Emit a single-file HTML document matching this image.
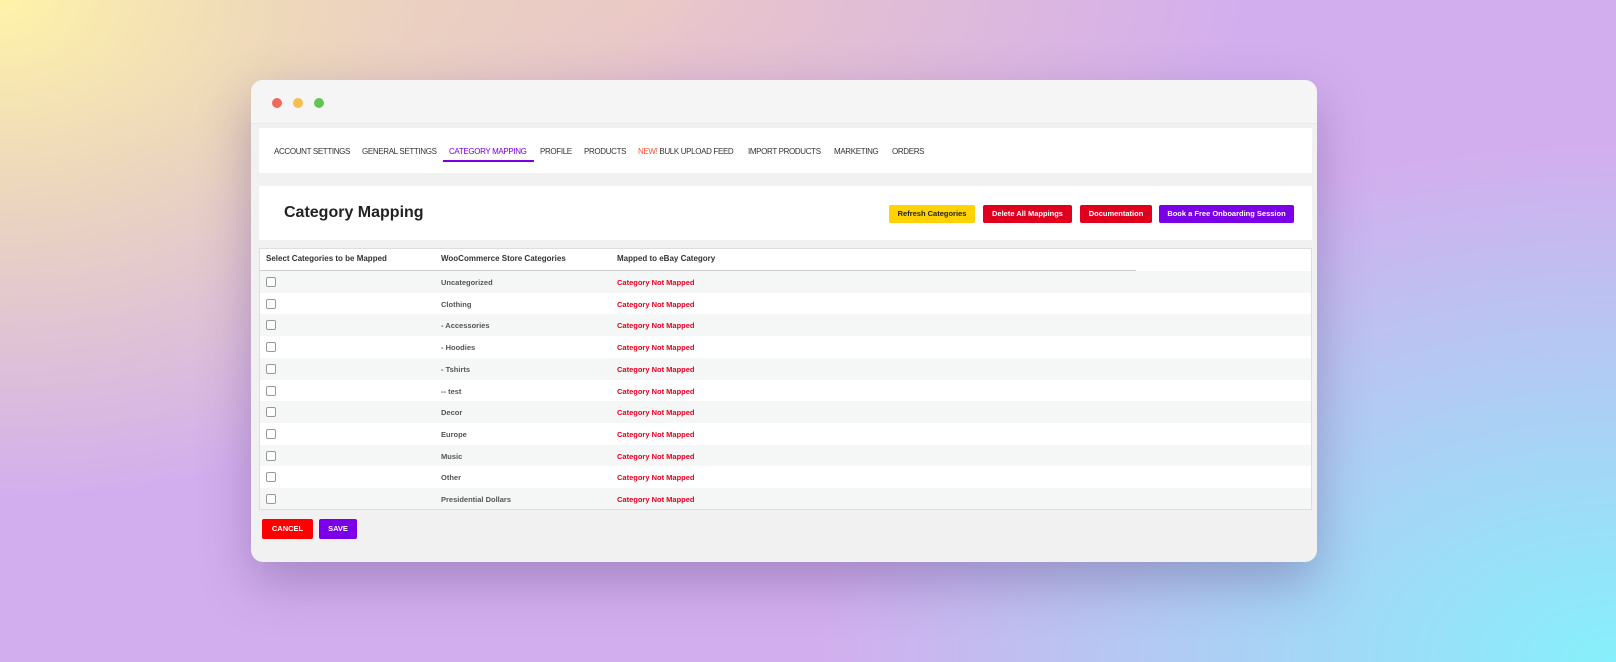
<!DOCTYPE html>
<html><head><style>
*{margin:0;padding:0;box-sizing:border-box}
body{width:1616px;height:662px;overflow:hidden;font-family:"Liberation Sans",sans-serif;position:relative;
background:
radial-gradient(ellipse 700px 500px at 0% 0%,#fff3a8 0%,rgba(246,230,170,.7) 40%,rgba(240,210,180,0) 100%),
radial-gradient(ellipse 800px 520px at 100% 100%,#86f0fb 0%,rgba(134,240,251,.6) 40%,rgba(134,240,251,0) 100%),
radial-gradient(ellipse 600px 300px at 40% 0%,rgba(240,205,190,.8) 0%,rgba(240,205,190,0) 100%),
#d3aeee;}
.win{position:absolute;left:251px;top:80px;width:1066px;height:482px;background:#f1f1f1;border-radius:12px;overflow:hidden;box-shadow:0 20px 50px rgba(80,60,120,.35)}
.tb{height:44px;background:#f5f5f5;border-bottom:1px solid #e8e8e8}
.dot{position:absolute;top:18px;width:10px;height:10px;border-radius:50%}
.nav{position:absolute;left:8px;top:48px;width:1053px;height:45px;background:#fff}
.nav span{position:absolute;top:19px;font-size:8px;color:#333;white-space:nowrap;letter-spacing:-.35px}
.hdr{position:absolute;left:8px;top:106px;width:1053px;height:54px;background:#fff}
.hdr h1{position:absolute;left:25px;top:18px;font-size:16px;font-weight:bold;color:#222}
.btn{position:absolute;top:19px;height:18px;font-size:7.5px;font-weight:bold;color:#fff;border-radius:2px;text-align:center;line-height:18px;white-space:nowrap}
.tbl{position:absolute;left:8px;top:168px;width:1053px;height:262px;background:#fff;border:1px solid #ddd;overflow:hidden}
.row{position:absolute;left:0;width:1051px;height:21.8px;font-size:7.5px;font-weight:bold}
.row .c2{position:absolute;left:181px;top:7px;color:#555}
.row .c3{position:absolute;left:357px;top:7px;color:#e8001c}
.cb{position:absolute;left:6px;top:6px;width:10px;height:10px;border:1px solid #999;border-radius:2px;background:#fff}
.th{position:absolute;top:5px;font-size:8px;font-weight:bold;color:#333}
</style></head><body>
<div class="win">
<div class="tb"></div>
<div class="dot" style="left:21px;background:#ec6a5e"></div>
<div class="dot" style="left:42px;background:#f5bf4f"></div>
<div class="dot" style="left:63px;background:#61c554"></div>
<div class="nav">
<span style="left:15px">ACCOUNT SETTINGS</span>
<span style="left:103px">GENERAL SETTINGS</span>
<span style="left:190px;color:#7b00e0">CATEGORY MAPPING</span>
<div style="position:absolute;left:184px;top:32px;width:91px;height:2px;background:#7b00e0"></div>
<span style="left:281px">PROFILE</span>
<span style="left:325px">PRODUCTS</span>
<span style="left:379px"><b style="color:#f05a28;font-weight:normal">NEW!</b> BULK UPLOAD FEED</span>
<span style="left:489px">IMPORT PRODUCTS</span>
<span style="left:575px">MARKETING</span>
<span style="left:633px">ORDERS</span>
</div>
<div class="hdr">
<h1>Category Mapping</h1>
<div class="btn" style="left:630px;width:86px;background:#ffd200;color:#222">Refresh Categories</div>
<div class="btn" style="left:724px;width:89px;background:#e0001e">Delete All Mappings</div>
<div class="btn" style="left:821px;width:72px;background:#e0001e">Documentation</div>
<div class="btn" style="left:900px;width:135px;background:#7b00e8">Book a Free Onboarding Session</div>
</div>
<div class="tbl">
<div class="th" style="left:6px">Select Categories to be Mapped</div>
<div class="th" style="left:181px">WooCommerce Store Categories</div>
<div class="th" style="left:357px">Mapped to eBay Category</div>
<div style="position:absolute;left:0;top:21px;width:876px;height:1px;background:#ccc"></div>
<div style="position:absolute;left:0;top:22px;width:1051px">
<div class="row" style="top:0;background:#f5f6f6"><div class="cb"></div><div class="c2">Uncategorized</div><div class="c3">Category Not Mapped</div></div>
<div class="row" style="top:21.7px"><div class="cb"></div><div class="c2">Clothing</div><div class="c3">Category Not Mapped</div></div>
<div class="row" style="top:43.4px;background:#f5f6f6"><div class="cb"></div><div class="c2">- Accessories</div><div class="c3">Category Not Mapped</div></div>
<div class="row" style="top:65.1px"><div class="cb"></div><div class="c2">- Hoodies</div><div class="c3">Category Not Mapped</div></div>
<div class="row" style="top:86.8px;background:#f5f6f6"><div class="cb"></div><div class="c2">- Tshirts</div><div class="c3">Category Not Mapped</div></div>
<div class="row" style="top:108.5px"><div class="cb"></div><div class="c2">-- test</div><div class="c3">Category Not Mapped</div></div>
<div class="row" style="top:130.2px;background:#f5f6f6"><div class="cb"></div><div class="c2">Decor</div><div class="c3">Category Not Mapped</div></div>
<div class="row" style="top:151.9px"><div class="cb"></div><div class="c2">Europe</div><div class="c3">Category Not Mapped</div></div>
<div class="row" style="top:173.6px;background:#f5f6f6"><div class="cb"></div><div class="c2">Music</div><div class="c3">Category Not Mapped</div></div>
<div class="row" style="top:195.3px"><div class="cb"></div><div class="c2">Other</div><div class="c3">Category Not Mapped</div></div>
<div class="row" style="top:217px;background:#f5f6f6"><div class="cb"></div><div class="c2">Presidential Dollars</div><div class="c3">Category Not Mapped</div></div>
</div>
</div>
<div class="btn" style="left:11px;top:439px;width:51px;height:20px;line-height:20px;background:#ff0000">CANCEL</div>
<div class="btn" style="left:68px;top:439px;width:38px;height:20px;line-height:20px;background:#7b00e8">SAVE</div>
</div>
</body></html>
